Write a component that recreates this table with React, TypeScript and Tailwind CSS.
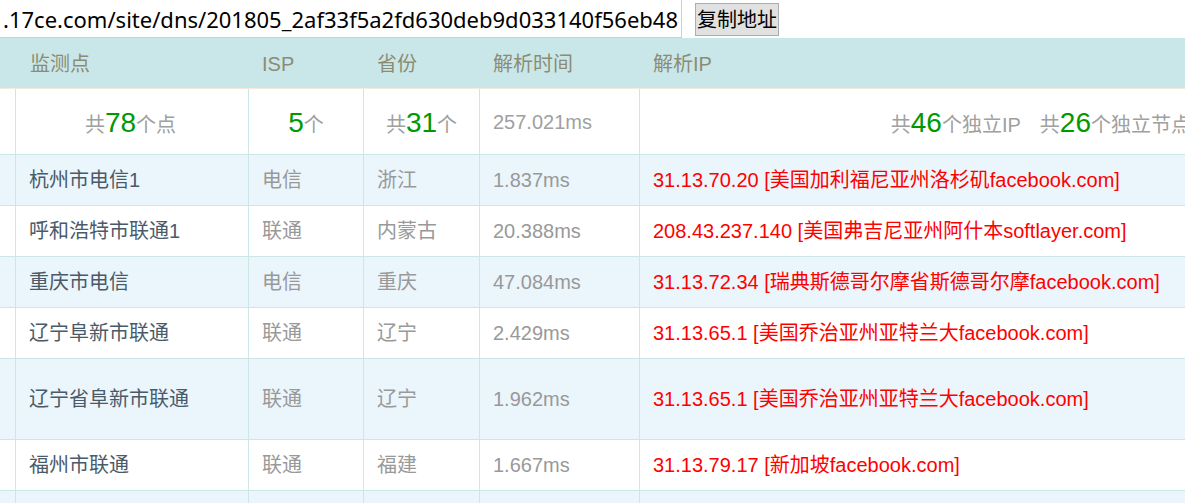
const rows = [
  { name: '杭州市电信1', isp: '电信', prov: '浙江', time: '1.837ms', ip: '31.13.70.20', loc: '[美国加利福尼亚州洛杉矶facebook.com]', h: 'h-[51px]' },
  { name: '呼和浩特市联通1', isp: '联通', prov: '内蒙古', time: '20.388ms', ip: '208.43.237.140', loc: '[美国弗吉尼亚州阿什本softlayer.com]', h: 'h-[51px]' },
  { name: '重庆市电信', isp: '电信', prov: '重庆', time: '47.084ms', ip: '31.13.72.34', loc: '[瑞典斯德哥尔摩省斯德哥尔摩facebook.com]', h: 'h-[51px]' },
  { name: '辽宁阜新市联通', isp: '联通', prov: '辽宁', time: '2.429ms', ip: '31.13.65.1', loc: '[美国乔治亚州亚特兰大facebook.com]', h: 'h-[51px]' },
  { name: '辽宁省阜新市联通', isp: '联通', prov: '辽宁', time: '1.962ms', ip: '31.13.65.1', loc: '[美国乔治亚州亚特兰大facebook.com]', h: 'h-[81px]' },
  { name: '福州市联通', isp: '联通', prov: '福建', time: '1.667ms', ip: '31.13.79.17', loc: '[新加坡facebook.com]', h: 'h-[51px]' },
  { name: '', isp: '', prov: '', time: '', ip: '', loc: '', h: 'h-[51px]' },
];

const cell = 'flex items-center border-l border-[#cde6e6] pl-[13px] whitespace-nowrap';

export default function App() {
  return (
    <div className="w-[1185px] h-[503px] overflow-hidden bg-white font-['Liberation_Sans','Noto_Sans_CJK_SC',sans-serif] text-[20px]">
      {/* address bar */}
      <div className="flex items-start h-[38px]">
        <div className="w-[682px] h-[38px] flex items-center justify-end overflow-hidden border-r border-b border-[#cfcfcf] pr-[3px]">
          <span className="whitespace-nowrap text-black font-['Noto_Sans',sans-serif] text-[22px] leading-none">
            .17ce.com/site/dns/201805_2af33f5a2fd630deb9d033140f56eb48
          </span>
        </div>
        <button className="ml-[13px] mt-[3px] w-[84px] h-[33px] bg-[#e1e1e1] border border-[#adadad] text-black text-[20px] leading-none flex items-center justify-center">
          复制地址
        </button>
      </div>

      <div className="w-[1206px]">
        {/* header */}
        <div className="flex h-[51px] bg-[#c9e7e9] border-b border-[#f3ead9] text-[#8c8c74]">
          <div className="w-[15px]" />
          <div className="w-[233px] flex items-center pl-[15px] pt-[2px]">监测点</div>
          <div className="w-[115px] flex items-center pl-[14px] pt-[2px]">ISP</div>
          <div className="w-[116px] flex items-center pl-[14px] pt-[2px]">省份</div>
          <div className="w-[160px] flex items-center pl-[14px] pt-[2px]">解析时间</div>
          <div className="flex-1 flex items-center pl-[14px] pt-[2px]">解析IP</div>
        </div>

        {/* summary */}
        <div className="flex h-[66px] bg-white border-b border-[#cde6e6] text-[#a0a0a0]">
          <div className="w-[15px]" />
          <div className="w-[233px] flex items-center justify-center border-l border-[#cde6e6] pt-[3px] pr-[3px]">
            <span>共<span className="text-[28px] text-[#009900]">78</span>个点</span>
          </div>
          <div className="w-[115px] flex items-center justify-center border-l border-[#cde6e6] pt-[3px]">
            <span><span className="text-[28px] text-[#009900]">5</span>个</span>
          </div>
          <div className="w-[116px] flex items-center justify-center border-l border-[#cde6e6] pt-[3px]">
            <span>共<span className="text-[28px] text-[#009900]">31</span>个</span>
          </div>
          <div className={`w-[160px] ${cell}`}>257.021ms</div>
          <div className="flex-1 flex items-center justify-end border-l border-[#cde6e6] pr-[15px] whitespace-nowrap pt-[3px]">
            <span>共<span className="text-[28px] text-[#009900]">46</span>个独立IP</span>
            <span className="ml-[19px]">共<span className="text-[28px] text-[#009900]">26</span>个独立节点</span>
          </div>
        </div>

        {/* data rows */}
        {rows.map((r, i) => (
          <div
            key={i}
            className={`flex ${r.h} border-b border-[#cde6e6] ${i % 2 === 0 ? 'bg-[#ebf5fc]' : 'bg-white'}`}
          >
            <div className="w-[15px]" />
            <div className={`w-[233px] text-[#4a5a69] ${cell}`}>{r.name}</div>
            <div className={`w-[115px] text-[#999999] ${cell}`}>{r.isp}</div>
            <div className={`w-[116px] text-[#999999] ${cell}`}>{r.prov}</div>
            <div className={`w-[160px] text-[#999999] ${cell}`}>{r.time}</div>
            <div className={`flex-1 text-[#ff0000] ${cell}`}>
              {r.ip && (
                <span>
                  {r.ip} {r.loc}
                </span>
              )}
            </div>
          </div>
        ))}
      </div>
    </div>
  );
}
